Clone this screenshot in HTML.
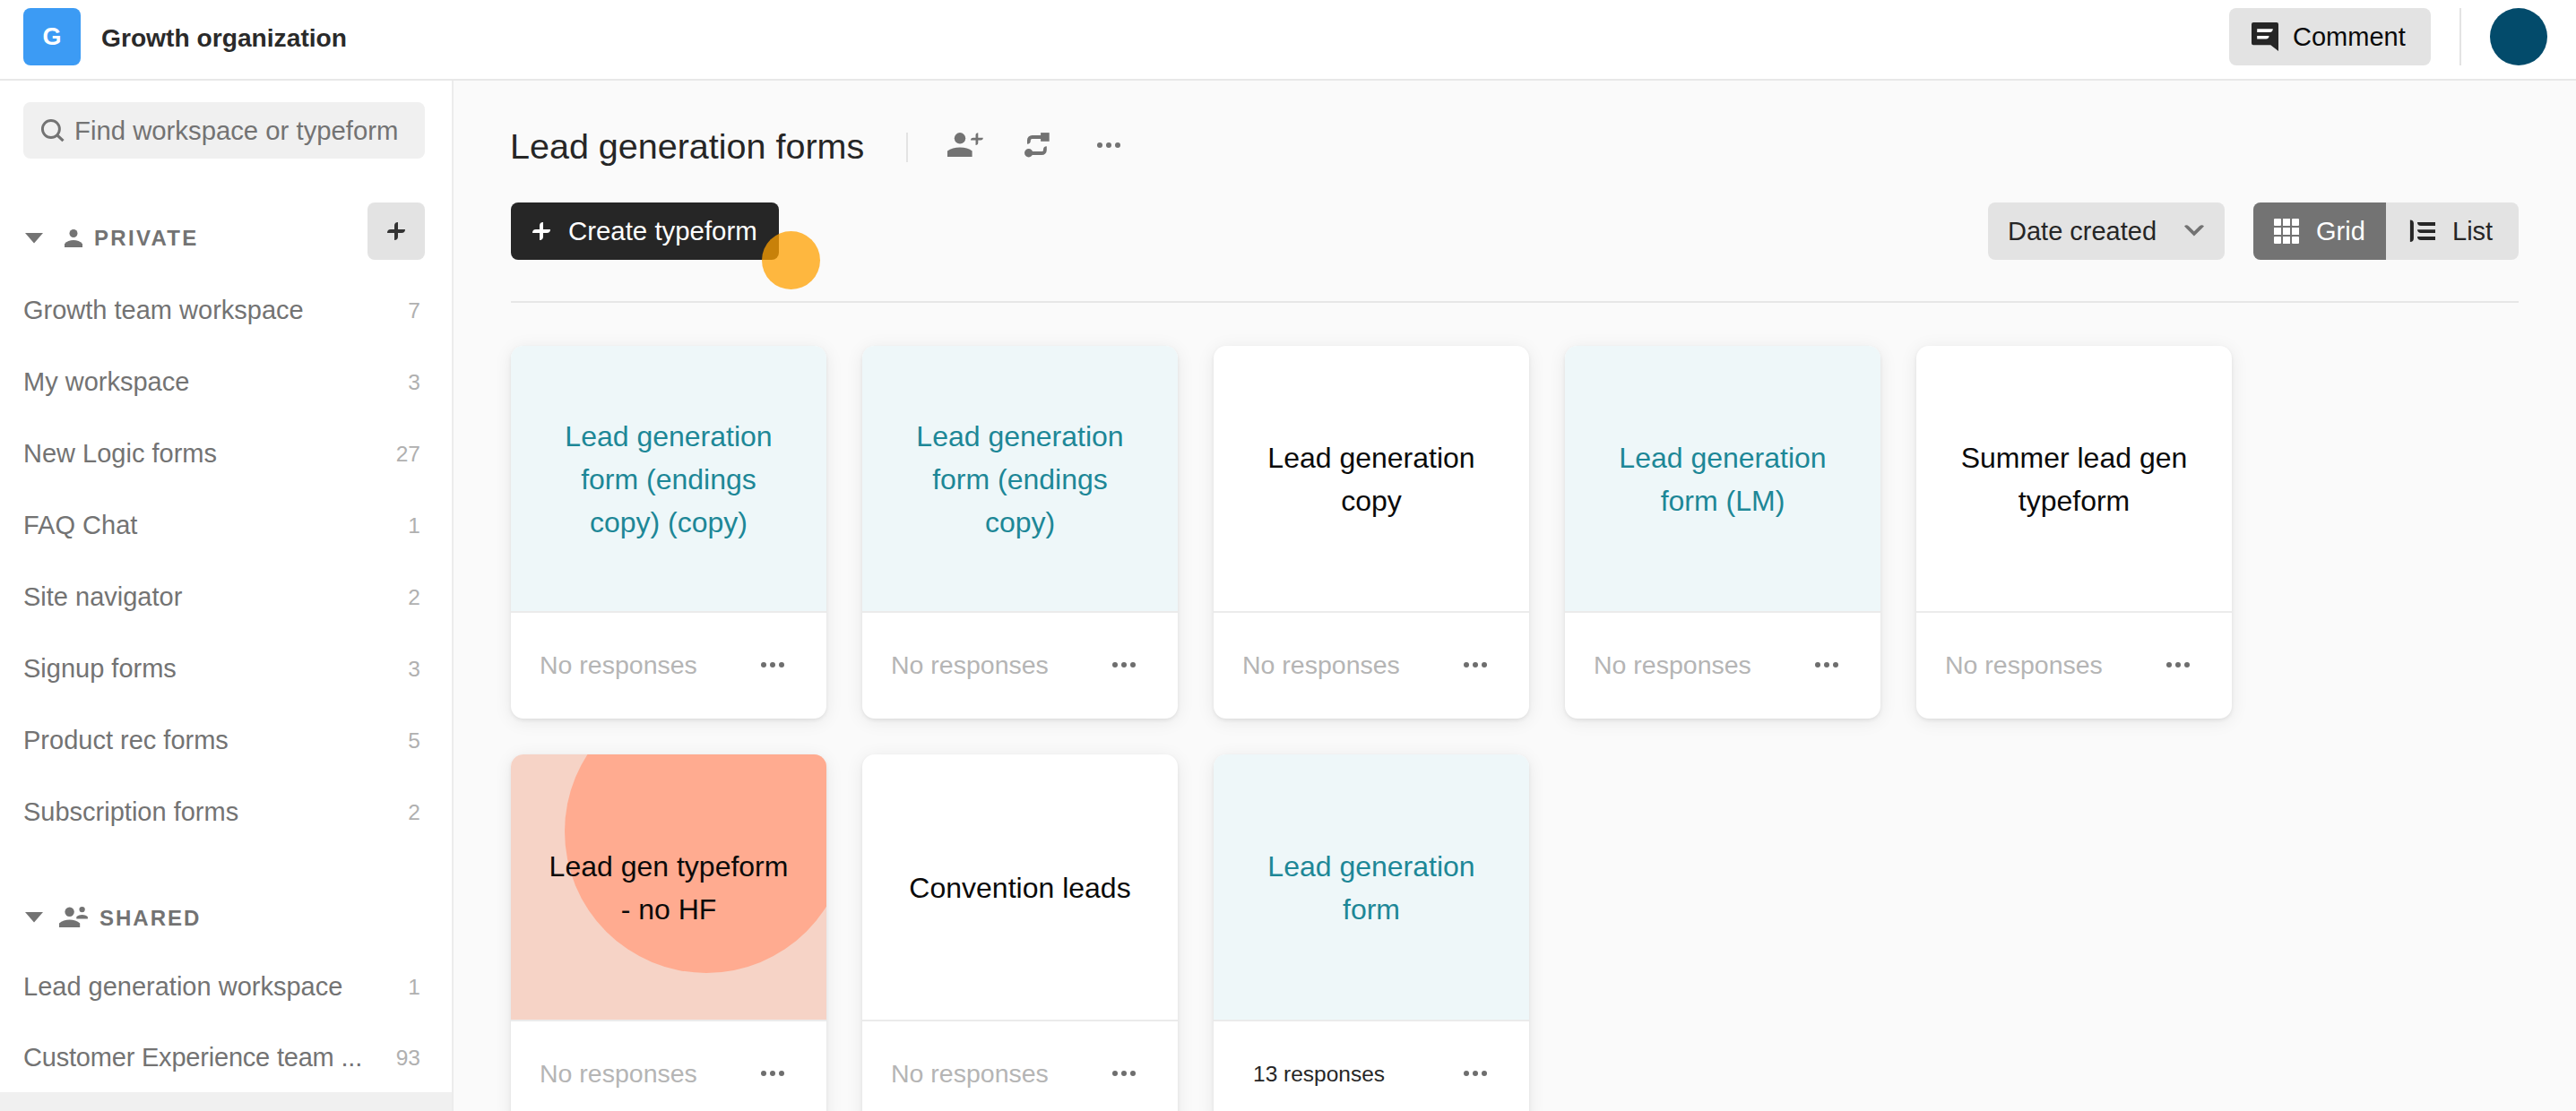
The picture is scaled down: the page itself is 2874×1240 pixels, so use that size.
<!DOCTYPE html>
<html>
<head>
<meta charset="utf-8">
<style>
*{margin:0;padding:0;box-sizing:border-box}
html,body{width:2874px;height:1240px;overflow:hidden;background:#fafafa;font-family:"Liberation Sans",sans-serif;position:relative}
.a{position:absolute}
.t{position:absolute;white-space:nowrap;line-height:40px}
#hdr{left:0;top:0;width:2874px;height:88px;background:#fff;border-bottom:2px solid #e8e8e8;height:90px}
#side{left:0;top:90px;width:506px;height:1150px;background:#fff;border-right:2px solid #ececec}
.sitem{font-size:29px;color:#737373}
.scount{font-size:24.5px;color:#b0b0b0;text-align:right;width:59px;margin-top:0.5px}
.card{position:absolute;width:352px;height:416px;background:#fff;border-radius:14px;overflow:hidden;box-shadow:0 3px 20px rgba(0,0,0,0.08),0 2px 4px rgba(0,0,0,0.07)}
.ctop{position:absolute;left:0;top:0;width:352px;height:296px;border-bottom:2px solid #ebebeb;height:298px;display:flex;align-items:center;justify-content:center;text-align:center;padding-top:2px}
.ctitle{font-size:32px;line-height:48px;width:272px;color:#0a0a0a}
.teal .ctop{background:#eef7f9}
.teal .ctitle{color:#1d8797}
.nores{position:absolute;left:32px;top:336px;font-size:28.5px;line-height:40px;color:#b5b5b5;white-space:nowrap}
.dots{position:absolute;left:279px;top:353px;width:26px;height:6px}
</style>
</head>
<body>
<!-- header -->
<div id="hdr" class="a">
  <div class="a" style="left:26px;top:9px;width:64px;height:64px;border-radius:8px;background:#3c9bf4"></div>
  <div class="t" style="left:26px;top:21px;width:64px;text-align:center;font-size:27px;font-weight:bold;color:#fff">G</div>
  <div class="t" style="left:113px;top:22px;font-size:28.2px;font-weight:bold;color:#2a2a2a">Growth organization</div>
  <div class="a" style="left:2487px;top:9px;width:225px;height:64px;border-radius:8px;background:#e3e3e3"></div>
  <svg class="a" style="left:2512px;top:25px" width="30" height="32" viewBox="0 0 30 32">
    <path d="M2 0H28A2 2 0 0 1 30 2V32L21.3 25.3H2A2 2 0 0 1 0 23.3V2A2 2 0 0 1 2 0Z" fill="#262626"/>
    <path d="M6.2 7.3H23.8A3.6 3.6 0 0 1 20.2 10.9H6.2Z" fill="#fff"/>
    <path d="M6.2 15H19.5A3.4 3.4 0 0 1 16.1 18.4H6.2Z" fill="#fff"/>
  </svg>
  <div class="t" style="left:2558px;top:21px;font-size:29px;color:#0a0a0a">Comment</div>
  <div class="a" style="left:2744px;top:9px;width:2px;height:64px;background:#e3e3e3"></div>
  <div class="a" style="left:2778px;top:9px;width:64px;height:64px;border-radius:50%;background:#034b6b"></div>
</div>

<!-- sidebar -->
<div id="side" class="a"></div>
<div class="a" style="left:26px;top:114px;width:448px;height:63px;border-radius:8px;background:#f0f0f0"></div>
<svg class="a" style="left:44px;top:131px" width="30" height="30" viewBox="0 0 30 30">
  <circle cx="12.9" cy="13" r="9.5" fill="none" stroke="#737373" stroke-width="2.9"/>
  <path d="M19.8 19.8L26.5 26.2" stroke="#737373" stroke-width="3.2" stroke-linecap="butt"/>
</svg>
<div class="t" style="left:83px;top:126px;font-size:29.3px;color:#737373">Find workspace or typeform</div>

<!-- PRIVATE section -->
<svg class="a" style="left:28px;top:260px" width="20" height="12" viewBox="0 0 20 12"><path d="M0 0H20L10 11.5Z" fill="#737373"/></svg>
<svg class="a" style="left:72px;top:256px" width="20" height="20" viewBox="0 0 20 20">
  <circle cx="10" cy="4.5" r="4.5" fill="#737373"/>
  <path d="M0 16.2C2.5 13.4 6 12.1 10 12.1S17.5 13.4 20 16.2V20H0Z" fill="#737373"/>
</svg>
<div class="t" style="left:105px;top:246px;font-size:24px;font-weight:bold;color:#737373;letter-spacing:2.3px">PRIVATE</div>
<div class="a" style="left:410px;top:226px;width:64px;height:64px;border-radius:8px;background:#e3e3e3"></div>
<svg class="a" style="left:432px;top:248px" width="20" height="20" viewBox="0 0 20 20"><path d="M0 12A4 4 0 0 1 4 8L8 8L8 4A4 4 0 0 1 12 0L12 8L20 8A4 4 0 0 1 16 12L12 12L12 16A4 4 0 0 1 8 20L8 12Z" fill="#333"/></svg>

<div class="t sitem" style="left:26px;top:326px">Growth team workspace</div><div class="t scount" style="left:410px;top:326px">7</div>
<div class="t sitem" style="left:26px;top:406px">My workspace</div><div class="t scount" style="left:410px;top:406px">3</div>
<div class="t sitem" style="left:26px;top:486px">New Logic forms</div><div class="t scount" style="left:410px;top:486px">27</div>
<div class="t sitem" style="left:26px;top:566px">FAQ Chat</div><div class="t scount" style="left:410px;top:566px">1</div>
<div class="t sitem" style="left:26px;top:646px">Site navigator</div><div class="t scount" style="left:410px;top:646px">2</div>
<div class="t sitem" style="left:26px;top:726px">Signup forms</div><div class="t scount" style="left:410px;top:726px">3</div>
<div class="t sitem" style="left:26px;top:806px">Product rec forms</div><div class="t scount" style="left:410px;top:806px">5</div>
<div class="t sitem" style="left:26px;top:886px">Subscription forms</div><div class="t scount" style="left:410px;top:886px">2</div>

<!-- SHARED section -->
<svg class="a" style="left:28px;top:1018px" width="20" height="12" viewBox="0 0 20 12"><path d="M0 0H20L10 11.5Z" fill="#737373"/></svg>
<svg class="a" style="left:66px;top:1011px" width="32" height="24" viewBox="0 0 32 24">
  <circle cx="11.6" cy="6.8" r="5.2" fill="#737373"/>
  <path d="M0 19.6C3 16.8 7 15.6 11.6 15.6S20.2 16.8 23.2 19.6V24H0Z" fill="#737373"/>
  <circle cx="25.6" cy="4.1" r="3.2" fill="#737373"/>
  <path d="M19.3 12.3C21 10.6 23.2 9.9 25.6 9.9S30.2 10.6 31.9 12.3V14.4H19.3Z" fill="#737373"/>
</svg>
<div class="t" style="left:111px;top:1005px;font-size:24px;font-weight:bold;color:#737373;letter-spacing:2px">SHARED</div>
<div class="t sitem" style="left:26px;top:1081px">Lead generation workspace</div><div class="t scount" style="left:410px;top:1081px">1</div>
<div class="t sitem" style="left:26px;top:1160px;letter-spacing:-0.2px">Customer Experience team ...</div><div class="t scount" style="left:410px;top:1160px">93</div>
<div class="a" style="left:0;top:1219px;width:504px;height:21px;background:#f0f0f0"></div>

<!-- main header -->
<div class="t" style="left:569px;top:138px;font-size:39.5px;line-height:50px;color:#262626">Lead generation forms</div>
<div class="a" style="left:1011px;top:148px;width:2px;height:33px;background:#e3e3e3"></div>
<svg class="a" style="left:1057px;top:148px" width="40" height="27" viewBox="0 0 40 27">
  <circle cx="14" cy="6.3" r="6.2" fill="#737373"/>
  <path d="M0 20.5C3.5 17.8 8.5 16.4 14 16.4S24.5 17.8 27.6 20.5V27H0Z" fill="#737373"/>
  <path transform="translate(26 0.2) scale(0.69)" d="M0 12A4 4 0 0 1 4 8L8 8L8 4A4 4 0 0 1 12 0L12 8L20 8A4 4 0 0 1 16 12L12 12L12 16A4 4 0 0 1 8 20L8 12Z" fill="#737373"/>
</svg>
<svg class="a" style="left:1142px;top:147px" width="32" height="30" viewBox="0 0 32 30">
  <rect x="19.1" y="1.1" width="9.6" height="9.7" fill="#737373"/>
  <path d="M21 4.0L9.5 4.0A5.5 5.5 0 0 0 4.0 9.5L4.0 13.8A3.8 3.8 0 0 0 7.8 10.0L7.8 9.6A1.7 1.7 0 0 1 9.5 7.9L21 7.9Z" fill="#737373"/>
  <circle cx="5.7" cy="23.8" r="4.7" fill="#737373"/>
  <path transform="rotate(180 14.9 15)" d="M21 4.0L9.5 4.0A5.5 5.5 0 0 0 4.0 9.5L4.0 13.8A3.8 3.8 0 0 0 7.8 10.0L7.8 9.6A1.7 1.7 0 0 1 9.5 7.9L21 7.9Z" fill="#737373"/>
</svg>
<svg class="a" style="left:1221px;top:159px" width="30" height="7" viewBox="0 0 30 7">
  <circle cx="6" cy="3" r="3" fill="#737373"/><circle cx="16" cy="3" r="3" fill="#737373"/><circle cx="26" cy="3" r="3" fill="#737373"/>
</svg>

<div class="a" style="left:570px;top:226px;width:299px;height:64px;border-radius:8px;background:#262626"></div>
<svg class="a" style="left:594px;top:248px" width="20" height="20" viewBox="0 0 20 20"><path d="M0 12A4 4 0 0 1 4 8L8 8L8 4A4 4 0 0 1 12 0L12 8L20 8A4 4 0 0 1 16 12L12 12L12 16A4 4 0 0 1 8 20L8 12Z" fill="#fff"/></svg>
<div class="t" style="left:634px;top:238px;font-size:29.4px;color:#fff">Create typeform</div>
<div class="a" style="left:850px;top:258px;width:65px;height:65px;border-radius:50%;background:rgba(255,160,0,0.75)"></div>

<div class="a" style="left:2218px;top:226px;width:264px;height:64px;border-radius:8px;background:#e3e3e3"></div>
<div class="t" style="left:2240px;top:238px;font-size:29px;color:#262626">Date created</div>
<svg class="a" style="left:2436px;top:250px" width="24" height="15" viewBox="0 0 24 15"><path d="M1 2.6Q3 0 6 2.4L11.9 8.3L17.7 2.4Q20.8 0 23 2.6L11.9 13.6Z" fill="#737373"/></svg>

<div class="a" style="left:2514px;top:226px;width:296px;height:64px;border-radius:8px;background:#e3e3e3;overflow:hidden"><div class="a" style="left:0;top:0;width:148px;height:64px;background:#737373"></div></div>
<svg class="a" style="left:2537px;top:244px" width="28" height="28" viewBox="0 0 28 28" fill="#fff">
  <rect x="0" y="0" width="8" height="8" rx="1"/><rect x="10" y="0" width="8" height="8"/><rect x="20" y="0" width="8" height="8" rx="1"/>
  <rect x="0" y="10" width="8" height="8"/><rect x="10" y="10" width="8" height="8"/><rect x="20" y="10" width="8" height="8"/>
  <rect x="0" y="20" width="8" height="8" rx="1"/><rect x="10" y="20" width="8" height="8"/><rect x="20" y="20" width="8" height="8" rx="1"/>
</svg>
<div class="t" style="left:2584px;top:238px;font-size:29px;color:#fff">Grid</div>
<svg class="a" style="left:2688px;top:245px" width="30" height="26" viewBox="0 0 30 26" fill="#262626">
  <path d="M0.9 0.6A4 4 0 0 1 4.9 4.6V21A4 4 0 0 1 0.9 25Z"/>
  <path d="M9 3H29V7H13A4 4 0 0 1 9 3Z"/><path d="M9 11.2H29V15H13A3.8 3.8 0 0 1 9 11.2Z"/><path d="M9 19H29V23H13A4 4 0 0 1 9 19Z"/>
</svg>
<div class="t" style="left:2736px;top:238px;font-size:29px;color:#262626">List</div>

<div class="a" style="left:570px;top:336px;width:2240px;height:2px;background:#e6e6e6"></div>

<!-- cards row 1 -->
<div class="card teal" style="left:570px;top:386px"><div class="ctop"><div class="ctitle">Lead generation form (endings copy) (copy)</div></div><div class="nores">No responses</div><svg class="dots" viewBox="0 0 26 6"><circle cx="3" cy="3" r="3" fill="#6e6e6e"/><circle cx="13" cy="3" r="3" fill="#6e6e6e"/><circle cx="23" cy="3" r="3" fill="#6e6e6e"/></svg></div>
<div class="card teal" style="left:962px;top:386px"><div class="ctop"><div class="ctitle">Lead generation form (endings copy)</div></div><div class="nores">No responses</div><svg class="dots" viewBox="0 0 26 6"><circle cx="3" cy="3" r="3" fill="#6e6e6e"/><circle cx="13" cy="3" r="3" fill="#6e6e6e"/><circle cx="23" cy="3" r="3" fill="#6e6e6e"/></svg></div>
<div class="card" style="left:1354px;top:386px"><div class="ctop"><div class="ctitle">Lead generation copy</div></div><div class="nores">No responses</div><svg class="dots" viewBox="0 0 26 6"><circle cx="3" cy="3" r="3" fill="#6e6e6e"/><circle cx="13" cy="3" r="3" fill="#6e6e6e"/><circle cx="23" cy="3" r="3" fill="#6e6e6e"/></svg></div>
<div class="card teal" style="left:1746px;top:386px"><div class="ctop"><div class="ctitle">Lead generation form (LM)</div></div><div class="nores">No responses</div><svg class="dots" viewBox="0 0 26 6"><circle cx="3" cy="3" r="3" fill="#6e6e6e"/><circle cx="13" cy="3" r="3" fill="#6e6e6e"/><circle cx="23" cy="3" r="3" fill="#6e6e6e"/></svg></div>
<div class="card" style="left:2138px;top:386px"><div class="ctop"><div class="ctitle">Summer lead gen typeform</div></div><div class="nores">No responses</div><svg class="dots" viewBox="0 0 26 6"><circle cx="3" cy="3" r="3" fill="#6e6e6e"/><circle cx="13" cy="3" r="3" fill="#6e6e6e"/><circle cx="23" cy="3" r="3" fill="#6e6e6e"/></svg></div>

<!-- cards row 2 -->
<div class="card" style="left:570px;top:842px"><div class="ctop" style="background:#f6d3c6;overflow:hidden"><div class="a" style="left:60px;top:-72px;width:316px;height:316px;border-radius:50%;background:#ffab90"></div><div class="ctitle" style="position:relative">Lead gen typeform - no HF</div></div><div class="nores">No responses</div><svg class="dots" viewBox="0 0 26 6"><circle cx="3" cy="3" r="3" fill="#6e6e6e"/><circle cx="13" cy="3" r="3" fill="#6e6e6e"/><circle cx="23" cy="3" r="3" fill="#6e6e6e"/></svg></div>
<div class="card" style="left:962px;top:842px"><div class="ctop"><div class="ctitle">Convention leads</div></div><div class="nores">No responses</div><svg class="dots" viewBox="0 0 26 6"><circle cx="3" cy="3" r="3" fill="#6e6e6e"/><circle cx="13" cy="3" r="3" fill="#6e6e6e"/><circle cx="23" cy="3" r="3" fill="#6e6e6e"/></svg></div>
<div class="card teal" style="left:1354px;top:842px"><div class="ctop"><div class="ctitle">Lead generation form</div></div><div class="nores" style="left:44px;top:337px;font-size:24.5px;color:#262626">13 responses</div><svg class="dots" viewBox="0 0 26 6"><circle cx="3" cy="3" r="3" fill="#6e6e6e"/><circle cx="13" cy="3" r="3" fill="#6e6e6e"/><circle cx="23" cy="3" r="3" fill="#6e6e6e"/></svg></div>

</body>
</html>
